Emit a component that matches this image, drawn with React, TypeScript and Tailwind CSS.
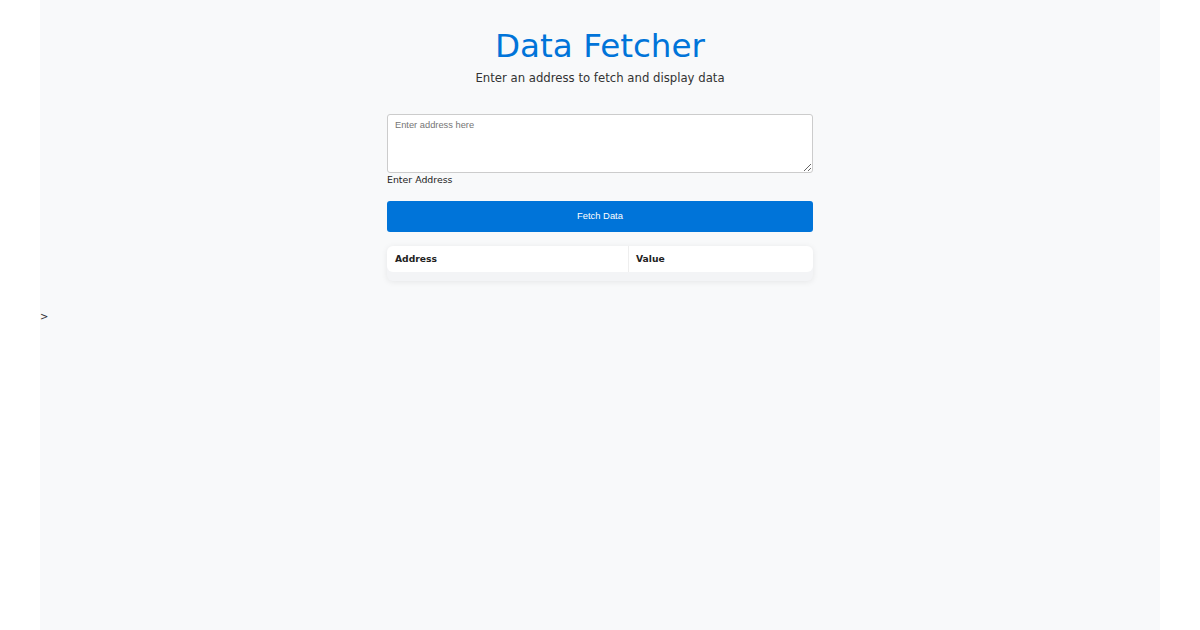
export default function App() {
  return (
    <div className="min-h-screen bg-white px-[40px]">
      <div className="min-h-[630px] bg-[#f8f9fa] pt-[28px] font-['DejaVu_Sans',sans-serif] text-[#333]">
        <div className="mx-auto w-[426px]">
          <h1 className="text-center text-[32.6px] leading-[36px] text-[#0074d9]">Data Fetcher</h1>
          <p className="mt-[7px] text-center text-[11.7px] leading-[14px] text-[#333]">
            Enter an address to fetch and display data
          </p>

          <textarea
            placeholder="Enter address here"
            className="mt-[29px] block h-[59px] w-full rounded-[3px] border border-[#ccc] bg-white px-[7px] py-[4px] font-['Liberation_Sans',Arial,sans-serif] text-[9.3px] leading-[12px] text-[#333] placeholder:text-[#757575] focus:outline-none"
          />
          <label className="block pt-[1px] text-[9.4px] leading-[12px] text-[#222]">Enter Address</label>

          <button
            type="button"
            className="mt-[15px] block h-[31px] w-full rounded-[3px] bg-[#0074d9] font-['Liberation_Sans',Arial,sans-serif] text-[9.4px] text-white"
          >
            Fetch Data
          </button>

          <div className="mt-[14px] rounded-[6px] bg-[#f3f4f6] pb-[9px] shadow-[0_1px_6px_rgba(0,0,0,0.08)]">
            <div className="grid h-[26px] grid-cols-[242px_1fr] rounded-[6px] bg-white text-[9.2px] font-bold text-[#222]">
              <div className="flex items-center border-r border-[#eee] px-[8px]">Address</div>
              <div className="flex items-center px-[7px]">Value</div>
            </div>
          </div>
        </div>

        <div className="mt-[30px] text-[10px] leading-[12px] text-[#333]">&gt;</div>
      </div>
    </div>
  );
}
